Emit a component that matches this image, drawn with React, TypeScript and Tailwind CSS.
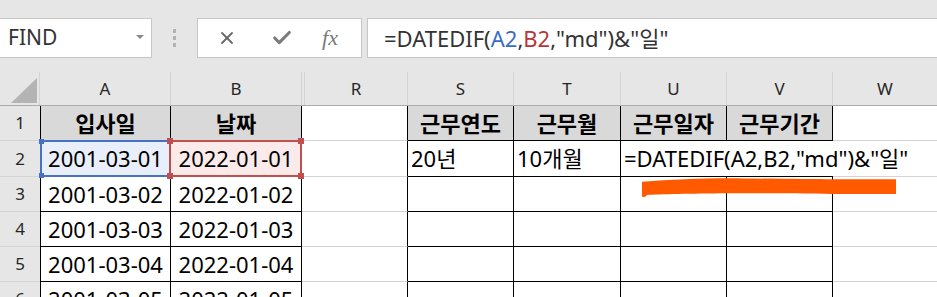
import React from 'react';
import { X, Check } from 'lucide-react';

const rows = [
  ['2001-03-02', '2022-01-02'],
  ['2001-03-03', '2022-01-03'],
  ['2001-03-04', '2022-01-04'],
  ['2001-03-05', '2022-01-05'],
];

function HeaderRow() {
  const col = 'shrink-0 h-full flex items-center justify-center border-r border-[#d4d4d4]';
  return (
    <div className="flex h-[34px] bg-[#e6e6e6] border-b border-[#ababab] text-[17px] text-[#262626]">
      {/* select-all corner */}
      <div className="relative w-[40px] shrink-0 h-full border-r border-[#d4d4d4]">
        <svg className="absolute left-0 top-0" width="40" height="34" viewBox="0 0 40 34">
          <polygon points="11,31 37,6 37,31" fill="#b4b4b4" />
        </svg>
      </div>
      <div className={`${col} w-[131px]`}>A</div>
      <div className={`${col} w-[131px]`}>B</div>
      <div className={`${col} w-[3px]`} />
      <div className={`${col} w-[103px]`}>R</div>
      <div className={`${col} w-[106px]`}>S</div>
      <div className={`${col} w-[107px]`}>T</div>
      <div className={`${col} w-[106px]`}>U</div>
      <div className={`${col} w-[106px]`}>V</div>
      <div className="flex-1 h-full flex items-center justify-center">W</div>
    </div>
  );
}

function RowNum({ n }: { n: number }) {
  return (
    <div className="w-[40px] shrink-0 h-full bg-[#e6e6e6] border-b border-[#d4d4d4] flex items-center justify-center text-[17px] text-[#262626]">
      {n}
    </div>
  );
}

// cells between the two tables and right of them
function Gap({ last }: { last?: boolean }) {
  return (
    <>
      <div className="w-[3px] shrink-0 h-full border-b border-[#d4d4d4]" />
      <div
        className={`w-[103px] shrink-0 h-full border-b border-r ${last ? 'border-b-[#d4d4d4]' : 'border-b-[#d4d4d4]'} border-r-black`}
      />
    </>
  );
}

export default function App() {
  const tbl = 'shrink-0 h-full border-r border-b border-black';
  const hd = 'bg-[#d9d9d9] flex items-center justify-center font-bold text-[22px] text-black';
  return (
    <div className="relative w-[937px] h-[297px] overflow-hidden bg-white font-['Noto_Sans','Noto_Sans_CJK_KR',sans-serif] text-black">
      {/* formula toolbar */}
      <div className="flex items-start h-[72px] bg-[#e6e6e6] pt-[18px]">
        <div className="relative w-[152px] h-[40px] bg-white border border-l-0 border-[#c6c6c6] flex items-center pl-[8px] text-[21px] text-[#333]">
          FIND
          <svg className="absolute left-[136px] top-[16px]" width="8" height="5" viewBox="0 0 8 5">
            <polygon points="0,0 8,0 4,4" fill="#8a8a8a" />
          </svg>
        </div>
        <div className="w-[45px] h-[40px] flex flex-col items-center justify-center gap-[3px]">
          <div className="w-[3px] h-[4px] bg-[#b2b2b2]" />
          <div className="w-[3px] h-[4px] bg-[#b2b2b2]" />
          <div className="w-[3px] h-[4px] bg-[#b2b2b2]" />
        </div>
        <div className="w-[165px] h-[40px] bg-white border border-[#c6c6c6] flex items-center">
          <div className="w-[56px] flex justify-center pl-[2px]">
            <X size={20} strokeWidth={2.2} color="#686868" />
          </div>
          <div className="w-[56px] flex justify-center">
            <Check size={22} strokeWidth={3.4} color="#7b7b7b" />
          </div>
          <div className="w-[40px] flex justify-center font-['Liberation_Serif',serif] italic text-[22px] text-[#7a7a7a] leading-none">
            fx
          </div>
        </div>
        <div className="ml-[5px] flex-1 h-[40px] bg-white border border-r-0 border-[#c6c6c6] flex items-center pl-[16px] text-[22px] text-[#333] whitespace-nowrap">
          =DATEDIF(<span className="text-[#3a6cc4]">A2</span>,<span className="text-[#b8353a]">B2</span>,"md")&amp;"일"
        </div>
      </div>

      <HeaderRow />

      {/* row 1 */}
      <div className="flex h-[35px]">
        <RowNum n={1} />
        <div className={`${tbl} ${hd} w-[131px] border-l`}>입사일</div>
        <div className={`${tbl} ${hd} w-[131px]`}>날짜</div>
        <Gap />
        <div className={`${tbl} ${hd} w-[106px]`}>근무연도</div>
        <div className={`${tbl} ${hd} w-[107px]`}>근무월</div>
        <div className={`${tbl} ${hd} w-[106px]`}>근무일자</div>
        <div className={`${tbl} ${hd} w-[106px]`}>근무기간</div>
        <div className="flex-1 h-full border-b border-[#d4d4d4]" />
      </div>

      {/* row 2 */}
      <div className="flex h-[36px] text-[22px]">
        <RowNum n={2} />
        <div className={`${tbl} relative w-[131px] border-l bg-[#e8effa] flex items-center justify-center`}>
          2001-03-01
          <div className="absolute -top-px -left-px right-0 -bottom-px border-2 border-r-0 border-[#4472c4] z-10" />
          <div className="absolute -top-[2px] -left-[2px] w-[5px] h-[5px] bg-[#4472c4] z-10" />
          <div className="absolute -bottom-[2px] -left-[2px] w-[5px] h-[5px] bg-[#4472c4] z-10" />
        </div>
        <div className={`${tbl} relative w-[131px] bg-[#fbeaea] flex items-center justify-center`}>
          2022-01-01
          <div className="absolute -top-px -left-[2px] -right-px -bottom-px border-2 border-[#c0504d] z-10" />
          <div className="absolute -top-[3px] -left-[4px] w-[6px] h-[6px] bg-[#c0504d] z-10" />
          <div className="absolute -bottom-[3px] -left-[4px] w-[6px] h-[6px] bg-[#c0504d] z-10" />
          <div className="absolute -top-[3px] -right-[3px] w-[6px] h-[6px] bg-[#c0504d] z-10" />
          <div className="absolute -bottom-[3px] -right-[3px] w-[6px] h-[6px] bg-[#c0504d] z-10" />
        </div>
        <Gap />
        <div className={`${tbl} w-[106px] flex items-center pl-[3px]`}>20년</div>
        <div className={`${tbl} w-[107px] flex items-center pl-[3px]`}>10개월</div>
        <div className="shrink-0 h-full w-[106px] border-b border-black flex items-center pl-[3px] whitespace-nowrap overflow-visible relative z-10">
          =DATEDIF(A2,B2,"md")&amp;"일"
        </div>
        <div className="shrink-0 h-full w-[106px] border-b border-black" />
        <div className="flex-1 h-full border-b border-[#d4d4d4]" />
      </div>

      {/* rows 3-6 */}
      {rows.map((r, i) => (
        <div key={i} className="flex h-[35px] text-[22px]">
          <RowNum n={i + 3} />
          <div className={`${tbl} w-[131px] border-l flex items-center justify-center`}>{r[0]}</div>
          <div className={`${tbl} w-[131px] flex items-center justify-center`}>{r[1]}</div>
          <Gap />
          <div className={`${tbl} w-[106px]`} />
          <div className={`${tbl} w-[107px]`} />
          <div className={`${tbl} w-[106px]`} />
          <div className={`${tbl} w-[106px]`} />
          <div className="flex-1 h-full border-b border-[#d4d4d4]" />
        </div>
      ))}

      {/* orange highlighter stroke */}
      <svg className="absolute left-[640px] top-[176px] z-20" width="260" height="24" viewBox="0 0 260 24">
        <path
          d="M2 5.7 C30 3.5 60 2.5 87 2.3 C130 2.6 170 3.3 193 3.3 L256 3.3 L256 18 L193 18 C150 17.5 110 17.2 87 17.3 C50 17.6 20 18.3 7 19 L5 21 L2 20.7 Z"
          fill="#ff5a00"
        />
      </svg>
    </div>
  );
}
